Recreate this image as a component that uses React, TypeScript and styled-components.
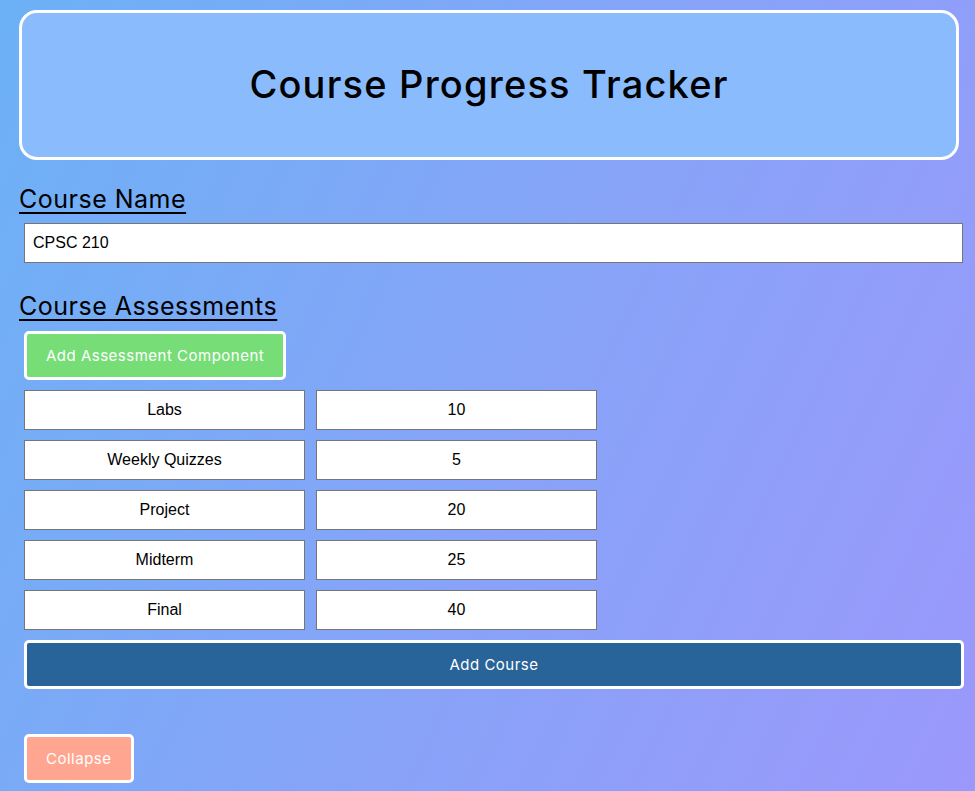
import React from "react"
import styled, { createGlobalStyle } from "styled-components"

const GlobalStyle = createGlobalStyle`
  html, body {
    margin: 0;
    padding: 0;
    min-height: 100%;
  }
  body {
    background: linear-gradient(115deg, #6cb1f5 0%, #86a4f8 50%, #9b98fb 100%);
    min-height: 791px;
    font-family: "Inter", "DejaVu Sans", sans-serif;
  }
`

const Page = styled.div`
  display: flex;
  flex-direction: column;
  align-items: flex-start;
  padding: 10px 12px 20px 19px;
  min-height: 791px;
  box-sizing: border-box;
`

const Header = styled.header`
  width: 940px;
  height: 150px;
  box-sizing: border-box;
  border: 3px solid #fff;
  border-radius: 18px;
  background: #89bbfd;
  display: flex;
  align-items: center;
  justify-content: center;
`

const Title = styled.h1`
  margin: 0 0 2px 0;
  font-family: "Inter", sans-serif;
  font-weight: 500;
  font-size: 38px;
  letter-spacing: 1.2px;
  color: #000;
`

const SectionLabel = styled.h2<{ $top: number }>`
  margin: ${(p) => p.$top}px 0 0 0;
  font-family: "Inter", sans-serif;
  font-weight: 400;
  font-size: 25px;
  letter-spacing: 0.5px;
  line-height: 36px;
  text-decoration: underline;
  text-underline-offset: 4px;
  text-decoration-thickness: 1.5px;
  color: #000;
`

const Field = styled.input<{ $width: number; $align?: string }>`
  width: ${(p) => p.$width}px;
  height: 40px;
  box-sizing: border-box;
  border: 1px solid #767676;
  background: #fff;
  padding: 0 8px;
  font-family: "Liberation Sans", Arial, sans-serif;
  font-size: 16px;
  color: #000;
  text-align: ${(p) => p.$align || "left"};
  outline: none;
`

const NameField = styled(Field)`
  margin: 6px 0 0 5px;
`

const Button = styled.button<{ $bg: string; $width?: string }>`
  box-sizing: border-box;
  height: 49px;
  width: ${(p) => p.$width || "auto"};
  padding: 0 19px;
  border: 3px solid #fff;
  border-radius: 5px;
  background: ${(p) => p.$bg};
  color: #fff;
  font-family: "Inter", sans-serif;
  font-size: 15px;
  font-weight: 400;
  letter-spacing: 0.5px;
  cursor: pointer;
`

const AssessmentList = styled.div`
  display: flex;
  flex-direction: column;
  gap: 10px;
  margin: 10px 0 0 5px;
`

const Row = styled.div`
  display: flex;
  gap: 11px;
`

const Spaced = styled.div<{ $top: number }>`
  margin: ${(p) => p.$top}px 0 0 5px;
`

const assessments = [
  { name: "Labs", weight: "10" },
  { name: "Weekly Quizzes", weight: "5" },
  { name: "Project", weight: "20" },
  { name: "Midterm", weight: "25" },
  { name: "Final", weight: "40" },
]

export default function App() {
  return (
    <>
      <GlobalStyle />
      <Page>
        <Header>
          <Title>Course Progress Tracker</Title>
        </Header>

        <SectionLabel $top={21}>Course Name</SectionLabel>
        <NameField $width={939} defaultValue="CPSC 210" />

        <SectionLabel $top={25}>Course Assessments</SectionLabel>
        <Spaced $top={7}>
          <Button $bg="#77dd77">Add Assessment Component</Button>
        </Spaced>

        <AssessmentList>
          {assessments.map((a) => (
            <Row key={a.name}>
              <Field $width={281} $align="center" defaultValue={a.name} />
              <Field $width={281} $align="center" defaultValue={a.weight} />
            </Row>
          ))}
        </AssessmentList>

        <Spaced $top={10}>
          <Button $bg="#286399" $width="940px">Add Course</Button>
        </Spaced>

        <Spaced $top={45}>
          <Button $bg="#ffa590">Collapse</Button>
        </Spaced>
      </Page>
    </>
  )
}
